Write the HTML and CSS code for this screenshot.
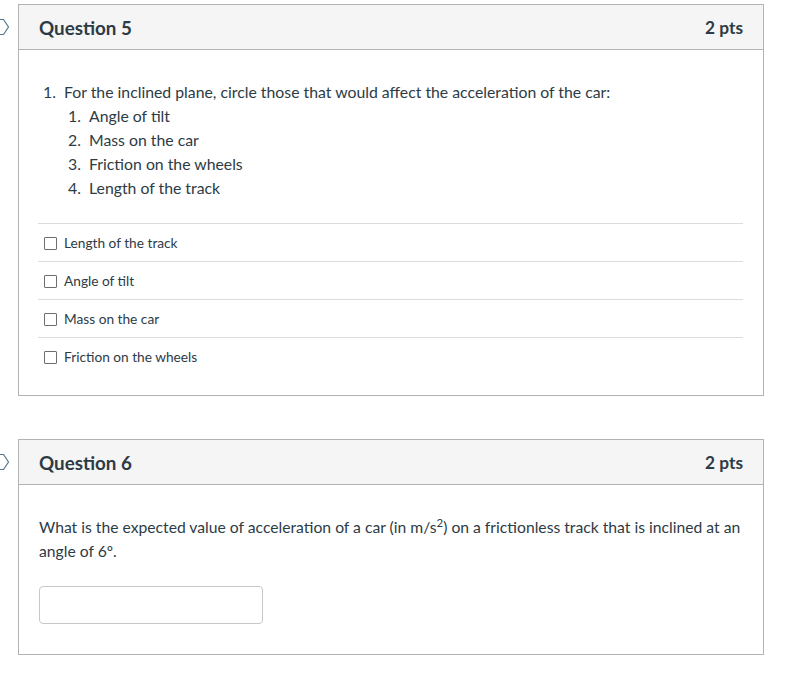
FILE: index.html
```html
<!DOCTYPE html>
<html>
<head>
<meta charset="utf-8">
<link rel="stylesheet" href="styles.css">
</head>
<body>
<div class="quiz">
  <div class="card">
    <svg class="pointer" width="10" height="18" viewBox="0 0 10 18"><polyline points="-4,1.5 3.5,1.5 8.5,9 3.5,16.5 -4,16.5" fill="none" stroke="#55778f" stroke-width="1.2"/></svg>
    <div class="card-head">
      <span class="title">Question 5</span>
      <span class="pts">2 pts</span>
    </div>
    <div class="card-body">
      <ol class="qlist">
        <li>For the inclined plane, circle those that would affect the acceleration of the car:
          <ol class="sublist">
            <li>Angle of tilt</li>
            <li>Mass on the car</li>
            <li>Friction on the wheels</li>
            <li>Length of the track</li>
          </ol>
        </li>
      </ol>
      <div class="answers">
        <label class="answer"><span class="box"></span>Length of the track</label>
        <label class="answer"><span class="box"></span>Angle of tilt</label>
        <label class="answer"><span class="box"></span>Mass on the car</label>
        <label class="answer"><span class="box"></span>Friction on the wheels</label>
      </div>
    </div>
  </div>

  <div class="card">
    <svg class="pointer" width="10" height="18" viewBox="0 0 10 18"><polyline points="-4,1.5 3.5,1.5 8.5,9 3.5,16.5 -4,16.5" fill="none" stroke="#55778f" stroke-width="1.2"/></svg>
    <div class="card-head">
      <span class="title">Question 6</span>
      <span class="pts">2 pts</span>
    </div>
    <div class="card-body body2">
      <p class="qtext">What is the expected value of acceleration of a car (in m/s<sup>2</sup>) on a frictionless track that is inclined at an angle of 6º.</p>
      <div class="input"></div>
    </div>
  </div>
</div>
</body>
</html>
```
FILE: styles.css
```css
* { box-sizing: border-box; }
html, body { margin: 0; padding: 0; background: #fff; }
body {
  font-family: Lato, "Open Sans", "Liberation Sans", sans-serif;
  color: #2d3b45;
}
.quiz {
  padding: 4px 0 0 18px;
  display: flex;
  flex-direction: column;
  gap: 43px;
}
.card {
  position: relative;
  width: 746px;
  border: 1px solid #b3b3b3;
  background: #fff;
}
.pointer {
  position: absolute;
  left: -19px;
  top: 13px;
}
.card-head {
  height: 45px;
  background: #f5f5f5;
  border-bottom: 1px solid #b3b3b3;
  display: flex;
  align-items: center;
  justify-content: space-between;
  padding: 0 20px 0 20px;
}
.title {
  font-weight: 700;
  font-size: 18.8px;
}
.pts {
  font-weight: 700;
  font-size: 17.3px;
}
.card-body {
  padding: 30px 20px 20px 20px;
  font-size: 15.8px;
  line-height: 24px;
}
.qlist, .sublist {
  margin: 0;
  padding-left: 25px;
}
.qlist li::marker {
  content: counter(list-item) ".\00a0\00a0";
}
.qlist { margin-bottom: 23px; }
.answers {
  margin-left: -1px;
}
.answer {
  display: flex;
  align-items: center;
  height: 38px;
  border-top: 1px solid #dcdcdc;
  font-size: 13.7px;
  padding-left: 6px;
  padding-top: 1px;
}
.box {
  width: 13px;
  height: 13px;
  border: 1px solid #6e6e6e;
  border-radius: 1px;
  margin-right: 7px;
  background: #fff;
}
.body2 { padding-bottom: 30px; }
.qtext { margin: 0 -6px 23px 0; font-size: 15.7px; }
.qtext sup { font-size: 11.5px; line-height: 0; vertical-align: 6px; }
.input {
  width: 224px;
  height: 38px;
  border: 1px solid #c7c7c7;
  border-radius: 4px;
}
```
